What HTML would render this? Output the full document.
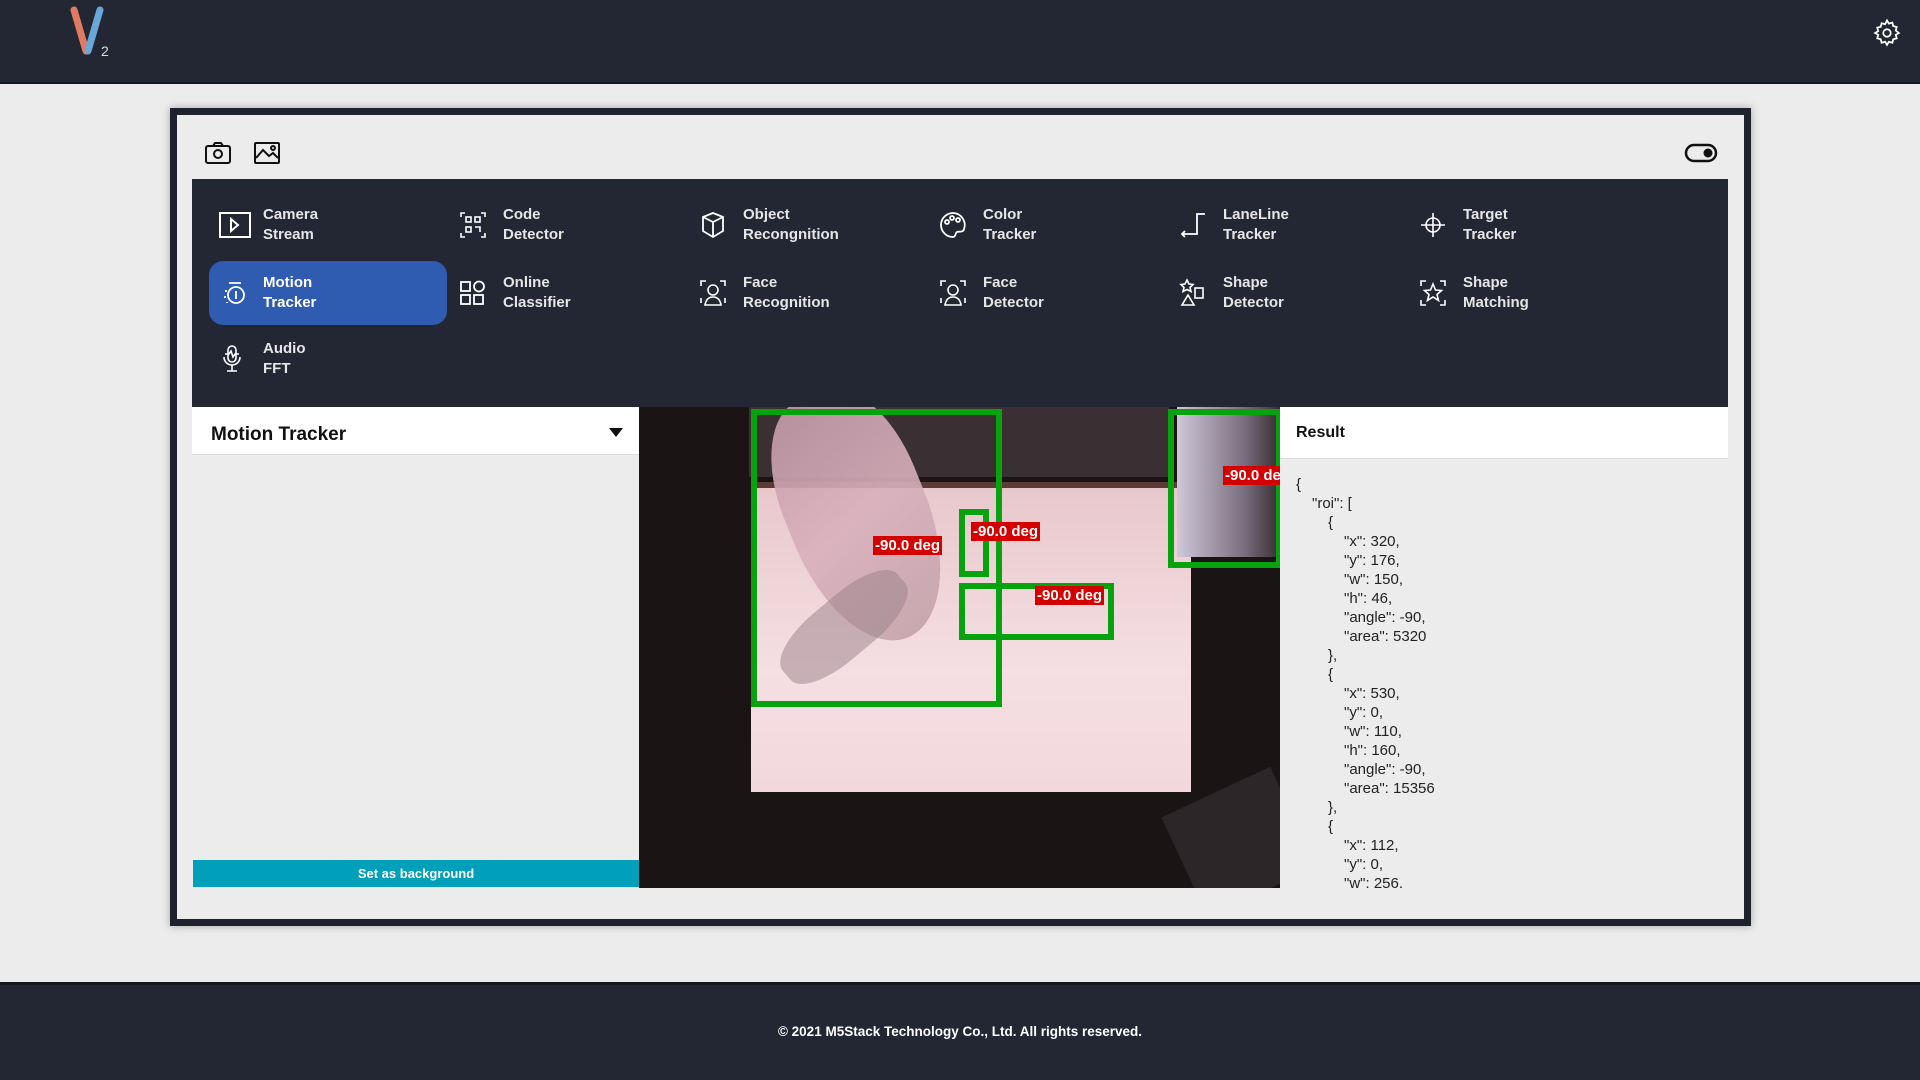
<!DOCTYPE html>
<html><head><meta charset="utf-8"><style>
*{margin:0;padding:0;box-sizing:border-box}
body{width:1920px;height:1080px;background:#ececec;font-family:"Liberation Sans",sans-serif;position:relative;overflow:hidden}
.hdr{position:absolute;left:0;top:0;width:1920px;height:84px;background:#222733;border-bottom:2px solid #151820}
.ftr{position:absolute;left:0;top:982px;width:1920px;height:98px;background:#222733;border-top:3px solid #151820;color:#fff;font-weight:bold;font-size:13.5px;text-align:center;line-height:94px}
.panel{position:absolute;left:170px;top:108px;width:1581px;height:818px;border:7px solid #1e222c;background:#ececec;box-shadow:0 0 8px rgba(0,0,0,.3)}
.menu{position:absolute;left:192px;top:179px;width:1536px;height:229px;background:#222733}
.it{position:absolute;height:64px;color:#e6e6e6;font-weight:bold;font-size:15px;line-height:20px}
.it svg{position:absolute;left:10px;top:17px}
.it span{position:absolute;left:54px;top:12px}
.act{background:#2f5bb0;border-radius:14px;color:#fff}
.abs{position:absolute}
.js div{height:19px;white-space:nowrap}
.l1{padding-left:16px}.l2{padding-left:32px}.l3{padding-left:48px}
</style></head><body>
<div class="hdr">
<svg class="abs" style="left:68px;top:6px" width="48" height="54" viewBox="0 0 48 54"><line x1="6" y1="4" x2="18" y2="45" stroke="#e07b62" stroke-width="7" stroke-linecap="round"/><line x1="32" y1="4" x2="20" y2="45" stroke="#6aa7d8" stroke-width="7" stroke-linecap="round"/><text x="33" y="50" fill="#ddd" font-size="14" font-family="Liberation Sans">2</text></svg>
<svg class="abs" style="left:1872px;top:18px" width="30" height="30" viewBox="0 0 24 24" fill="none" stroke="#fff" stroke-width="1.4"><circle cx="12" cy="12" r="3"/><path d="M12 2l1.5 2.5 2.8-.8.7 2.8 2.8.7-.8 2.8L21.5 12l-2.5 1.5.8 2.8-2.8.7-.7 2.8-2.8-.8L12 21.5l-1.5-2.5-2.8.8-.7-2.8-2.8-.7.8-2.8L2.5 12 5 10.5l-.8-2.8 2.8-.7.7-2.8 2.8.8z"/></svg>
</div>
<div class="panel"></div>
<svg class="abs" style="left:204px;top:141px" width="28" height="24" viewBox="0 0 28 24" fill="none" stroke="#111" stroke-width="2"><rect x="2" y="5" width="24" height="17" rx="2"/><path d="M9 5l2-3h6l2 3"/><circle cx="14" cy="13" r="4"/></svg>
<svg class="abs" style="left:253px;top:141px" width="28" height="24" viewBox="0 0 28 24" fill="none" stroke="#111" stroke-width="2"><rect x="2" y="2" width="24" height="20" rx="1"/><path d="M3 17l7-8 6 6 4-3 5 5"/><circle cx="20" cy="7" r="2"/></svg>
<svg class="abs" style="left:1684px;top:143px" width="34" height="20" viewBox="0 0 34 20"><rect x="2" y="2" width="30" height="16" rx="8" fill="none" stroke="#111" stroke-width="2.5"/><circle cx="24" cy="10" r="4.5" fill="#111"/></svg>
<div class="menu">
<div class="it" style="left:17px;top:14px;width:238px"><svg width="32" height="30" viewBox="0 0 32 30" fill="none" stroke="#fff" stroke-width="2"><rect x="1" y="3" width="30" height="24"/><path d="M12 9l7 6-7 6z"/></svg><span>Camera<br>Stream</span></div>
<div class="it" style="left:257px;top:14px;width:238px"><svg width="28" height="30" viewBox="0 0 28 30" fill="none" stroke="#fff" stroke-width="1.6"><path d="M2 7V3h4M22 3h4v4M2 23v4h4M22 27h4v-4"/><rect x="7" y="7" width="5" height="5"/><rect x="16" y="7" width="5" height="5"/><rect x="7" y="17" width="5" height="5"/><path d="M16 17h5v5"/></svg><span>Code<br>Detector</span></div>
<div class="it" style="left:497px;top:14px;width:238px"><svg width="28" height="30" viewBox="0 0 28 30" fill="none" stroke="#fff" stroke-width="1.8"><path d="M4 7l10-4 10 4v14l-10 6-10-6z M4 7l10 5 10-5 M14 12v15"/></svg><span>Object<br>Recongnition</span></div>
<div class="it" style="left:737px;top:14px;width:238px"><svg width="28" height="30" viewBox="0 0 28 30" fill="none" stroke="#fff" stroke-width="1.8"><path d="M14 3a12 12 0 1 0 0 24c3 0 2-4 4-5s6 1 7-3A12 12 0 0 0 14 3z"/><circle cx="8" cy="12" r="2"/><circle cx="13" cy="8" r="2"/><circle cx="19" cy="10" r="2"/></svg><span>Color<br>Tracker</span></div>
<div class="it" style="left:977px;top:14px;width:238px"><svg width="28" height="30" viewBox="0 0 28 30" fill="none" stroke="#fff" stroke-width="1.8"><path d="M26 4h-8v20H4M6 21l-3 3 3 3"/></svg><span>LaneLine<br>Tracker</span></div>
<div class="it" style="left:1217px;top:14px;width:238px"><svg width="28" height="30" viewBox="0 0 28 30" fill="none" stroke="#fff" stroke-width="1.6"><circle cx="14" cy="15" r="7"/><path d="M14 3v24M2 15h24"/></svg><span>Target<br>Tracker</span></div>
<div class="it act" style="left:17px;top:82px;width:238px"><svg width="32" height="30" viewBox="0 0 32 30" fill="none" stroke="#fff" stroke-width="1.8"><circle cx="17" cy="17" r="8"/><path d="M17 13v8M10 5h12M7 12v2M6 18v2M8 24v1"/></svg><span>Motion<br>Tracker</span></div>
<div class="it" style="left:257px;top:82px;width:238px"><svg width="28" height="30" viewBox="0 0 28 30" fill="none" stroke="#fff" stroke-width="1.8"><rect x="2" y="4" width="9" height="9"/><circle cx="20" cy="8.5" r="5"/><rect x="2" y="17" width="9" height="9"/><rect x="15" y="17" width="9" height="9"/></svg><span>Online<br>Classifier</span></div>
<div class="it" style="left:497px;top:82px;width:238px"><svg width="28" height="30" viewBox="0 0 28 30" fill="none" stroke="#fff" stroke-width="1.6"><path d="M2 8V3h5M21 3h5v5M2 20v5M26 20v5"/><circle cx="14" cy="12" r="5"/><path d="M6 27c1-6 4-8 8-8s7 2 8 8z"/></svg><span>Face<br>Recognition</span></div>
<div class="it" style="left:737px;top:82px;width:238px"><svg width="28" height="30" viewBox="0 0 28 30" fill="none" stroke="#fff" stroke-width="1.6"><path d="M2 8V3h5M21 3h5v5M2 20v5M26 20v5"/><circle cx="14" cy="12" r="5"/><path d="M6 27c1-6 4-8 8-8s7 2 8 8z"/></svg><span>Face<br>Detector</span></div>
<div class="it" style="left:977px;top:82px;width:238px"><svg width="28" height="30" viewBox="0 0 28 30" fill="none" stroke="#fff" stroke-width="1.6"><path d="M8 2l2 4 4 .5-3 3 1 4-4-2-4 2 1-4-3-3 4-.5z"/><rect x="16" y="10" width="8" height="10"/><path d="M9 17l6 10H3z"/></svg><span>Shape<br>Detector</span></div>
<div class="it" style="left:1217px;top:82px;width:238px"><svg width="28" height="30" viewBox="0 0 28 30" fill="none" stroke="#fff" stroke-width="1.6"><path d="M2 8V3h5M21 3h5v5M2 22v5h5M26 22v5h-5"/><path d="M14 6l2.5 6 6 .5-4.5 4 1.5 6-5.5-3.5-5.5 3.5 1.5-6-4.5-4 6-.5z"/></svg><span>Shape<br>Matching</span></div>
<div class="it" style="left:17px;top:148px;width:238px"><svg width="28" height="30" viewBox="0 0 28 30" fill="none" stroke="#fff" stroke-width="1.6"><rect x="9" y="2" width="8" height="16" rx="4"/><path d="M5 13a8 8 0 0 0 16 0M13 21v6M8 27h10M6 10h4l2-3 2 6 2-3h4"/></svg><span>Audio<br>FFT</span></div>
</div>
<div class="abs" style="left:192px;top:407px;width:447px;height:48px;background:#fff;border-bottom:1px solid #ddd"></div>
<div class="abs" style="left:211px;top:424px;font-weight:bold;font-size:19px;color:#111">Motion Tracker</div>
<svg class="abs" style="left:608px;top:427px" width="16" height="12"><path d="M1 1h14L8 10z" fill="#111"/></svg>
<div class="abs" style="left:193px;top:860px;width:446px;height:27px;background:#00a0ba;color:#fff;font-weight:bold;font-size:13px;text-align:center;line-height:27px">Set as background</div>
<div class="abs" style="left:639px;top:407px;width:641px;height:481px;background:#1a1414;overflow:hidden">
 <div class="abs" style="left:110px;top:0;width:420px;height:70px;background:#3a3034"></div>
 <div class="abs" style="left:112px;top:75px;width:440px;height:310px;background:linear-gradient(180deg,#e8c8cc,#f5dfe3 60%,#f2d8dc);border-top:6px solid #5a3b35"></div>
 <div class="abs" style="left:150px;top:-20px;width:140px;height:260px;background:linear-gradient(160deg,#c59aa8,#d8b0bc 50%,#c0a0a8);border-radius:40% 40% 50% 50%;transform:rotate(-22deg);opacity:.9"></div>
 <div class="abs" style="left:130px;top:190px;width:150px;height:60px;background:#9a8088;opacity:.5;transform:rotate(-40deg);border-radius:40%"></div>
 <div class="abs" style="left:538px;top:0;width:110px;height:150px;background:linear-gradient(90deg,#cfc8d8,#7a7080 60%,#2a2022)"></div>
 <div class="abs" style="left:540px;top:380px;width:120px;height:110px;background:#2c2628;transform:rotate(-25deg)"></div>
 <div class="abs" style="left:112px;top:2px;width:251px;height:298px;border:6px solid #07a30e"></div>
 <div class="abs" style="left:320px;top:102px;width:30px;height:68px;border:6px solid #07a30e"></div>
 <div class="abs" style="left:320px;top:176px;width:155px;height:57px;border:6px solid #07a30e"></div>
 <div class="abs" style="left:529px;top:2px;width:114px;height:159px;border:6px solid #07a30e"></div>
 <div class="abs" style="left:234px;top:129px;background:#d40000;color:#fff;font-weight:bold;font-size:15px;padding:1px 2px">-90.0 deg</div>
 <div class="abs" style="left:332px;top:115px;background:#d40000;color:#fff;font-weight:bold;font-size:15px;padding:1px 2px">-90.0 deg</div>
 <div class="abs" style="left:396px;top:179px;background:#d40000;color:#fff;font-weight:bold;font-size:15px;padding:1px 2px">-90.0 deg</div>
 <div class="abs" style="left:584px;top:59px;background:#d40000;color:#fff;font-weight:bold;font-size:15px;padding:1px 2px;white-space:nowrap">-90.0 deg</div>
</div>
<div class="abs" style="left:1280px;top:407px;width:448px;height:52px;background:#fff;border-bottom:1px solid #ddd"></div>
<div class="abs" style="left:1296px;top:424px;font-weight:bold;font-size:16px;color:#111">Result</div>
<div class="abs" style="left:1280px;top:460px;width:448px;height:428px;overflow:hidden">
<div class="js" style="position:absolute;left:16px;top:15px;font-size:15px;line-height:19px;color:#222">
<div>{</div><div class="l1">"roi": [</div><div class="l2">{</div>
<div class="l3">"x": 320,</div><div class="l3">"y": 176,</div><div class="l3">"w": 150,</div><div class="l3">"h": 46,</div><div class="l3">"angle": -90,</div><div class="l3">"area": 5320</div>
<div class="l2">},</div><div class="l2">{</div>
<div class="l3">"x": 530,</div><div class="l3">"y": 0,</div><div class="l3">"w": 110,</div><div class="l3">"h": 160,</div><div class="l3">"angle": -90,</div><div class="l3">"area": 15356</div>
<div class="l2">},</div><div class="l2">{</div>
<div class="l3">"x": 112,</div><div class="l3">"y": 0,</div><div class="l3">"w": 256,</div>
</div></div>
<div class="ftr">© 2021 M5Stack Technology Co., Ltd. All rights reserved.</div>
</body></html>
